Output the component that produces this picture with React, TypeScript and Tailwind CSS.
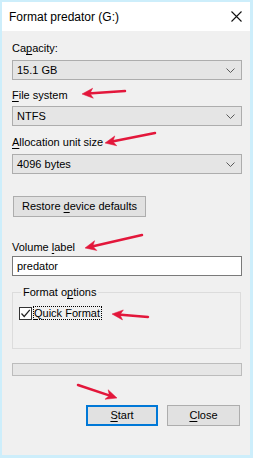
import React from "react";

const font = { fontFamily: "'Liberation Sans', Arial, sans-serif" };

type Arrow = { hx: number; hy: number; tx: number; ty: number };

// red annotation arrows, head first then tail
const arrows: Arrow[] = [
  { hx: 82, hy: 94, tx: 125, ty: 91 },
  { hx: 105, hy: 143, tx: 155, ty: 133 },
  { hx: 85, hy: 248, tx: 142, ty: 235 },
  { hx: 112, hy: 314, tx: 148, ty: 317 },
  { hx: 117, hy: 398, tx: 78, ty: 385 },
];

function ArrowShape({ a }: { a: Arrow }) {
  const dx = a.tx - a.hx;
  const dy = a.ty - a.hy;
  const len = Math.sqrt(dx * dx + dy * dy);
  const ux = dx / len;
  const uy = dy / len;
  const px = -uy;
  const py = ux;
  const hl = 11;
  const hw = 5;
  const bx = a.hx + ux * hl;
  const by = a.hy + uy * hl;
  const head = `${a.hx},${a.hy} ${bx + px * hw},${by + py * hw} ${a.hx + ux * (hl - 3)},${a.hy + uy * (hl - 3)} ${bx - px * hw},${by - py * hw}`;
  return (
    <g fill="#e3173b" stroke="#e3173b">
      <line x1={a.hx + ux * 6} y1={a.hy + uy * 6} x2={a.tx} y2={a.ty} strokeWidth={2.5} strokeLinecap="round" />
      <polygon points={head} strokeWidth={0.5} />
    </g>
  );
}

function U({ children }: { children: React.ReactNode }) {
  return <span className="underline underline-offset-2">{children}</span>;
}

function Chevron() {
  return (
    <svg width="9" height="5" viewBox="0 0 9 5" className="mr-[6px]">
      <path d="M0.5 0.5 L4.5 4.5 L8.5 0.5" fill="none" stroke="#5a5a5a" strokeWidth="1" />
    </svg>
  );
}

function Select({ value }: { value: string }) {
  return (
    <div className="h-[20px] flex items-center justify-between bg-[#e5e5e5] border border-[#adadad] pl-[4px]">
      <span className="leading-none">{value}</span>
      <Chevron />
    </div>
  );
}

export default function App() {
  return (
    <div
      className="relative w-[253px] h-[458px] bg-[#cdeefb] pl-[2px] pr-[3px] pt-[2px] pb-[3px] text-[11px] text-black overflow-hidden"
      style={font}
    >
      <div className="h-full flex flex-col">
        {/* Title bar */}
        <div className="h-[29px] bg-white flex items-center justify-between pl-[7px] pr-[5px]">
          <span className="text-[12px]">Format predator (G:)</span>
          <svg width="11" height="11" viewBox="0 0 11 11" className="mr-[3px]">
            <path d="M0.5 0.5 L10.5 10.5 M10.5 0.5 L0.5 10.5" stroke="#111" strokeWidth="1.1" />
          </svg>
        </div>

        {/* Body */}
        <div className="flex-1 bg-[#f0f0f0] pl-[10px] pr-[8px] flex flex-col">
          <div className="mt-[9px] leading-[16px]">
            Ca<U>p</U>acity:
          </div>
          <div className="mt-[4px]">
            <Select value="15.1 GB" />
          </div>

          <div className="mt-[7px] leading-[16px]">
            <U>F</U>ile system
          </div>
          <div className="mt-[3px]">
            <Select value="NTFS" />
          </div>

          <div className="mt-[8px] leading-[16px]">
            <U>A</U>llocation unit size
          </div>
          <div className="mt-[4px]">
            <Select value="4096 bytes" />
          </div>

          <button className="mt-[22px] ml-[1px] w-[133px] h-[21px] bg-[#e1e1e1] border border-[#adadad] text-left pl-[8px] leading-none whitespace-nowrap">
            Restore <U>d</U>evice defaults
          </button>

          <div className="mt-[22px] leading-[16px]">
            Volume <U>l</U>abel
          </div>
          <div className="mt-[1px] h-[20px] bg-white border border-[#7a7a7a] flex items-center pl-[4px]">
            predator
          </div>

          <fieldset className="mt-[8px] mr-[1px] h-[65px] border border-[#dcdcdc] pl-[6px]">
            <legend className="ml-[2px] px-[2px] leading-[16px]">
              Format o<U>p</U>tions
            </legend>
            <div className="mt-[6px] flex items-center">
              <div className="w-[13px] h-[13px] bg-white border border-[#333] flex items-center justify-center">
                <svg width="11" height="11" viewBox="0 0 11 11">
                  <path d="M1.5 5.5 L4.2 8.5 L9.8 1.8" fill="none" stroke="#222" strokeWidth="1.2" />
                </svg>
              </div>
              <span className="ml-[1px] h-[14px] flex items-center border border-dotted border-black pr-[1px] leading-none">
                <U>Q</U>uick Format
              </span>
            </div>
          </fieldset>

          <div className="mt-[14px] h-[13px] bg-[#e6e6e6] border border-[#bcbcbc]" />

          <div className="mt-[29px] flex justify-end gap-[9px] mr-[2px]">
            <button className="w-[72px] h-[21px] bg-[#e1e1e1] border-2 border-[#0078d7] leading-none">
              <U>S</U>tart
            </button>
            <button className="w-[73px] h-[21px] bg-[#e1e1e1] border border-[#adadad] leading-none">
              <U>C</U>lose
            </button>
          </div>
        </div>
      </div>

      {/* annotation arrows */}
      <svg className="absolute inset-0 pointer-events-none" width="253" height="458">
        {arrows.map((a, i) => (
          <ArrowShape key={i} a={a} />
        ))}
      </svg>
    </div>
  );
}
